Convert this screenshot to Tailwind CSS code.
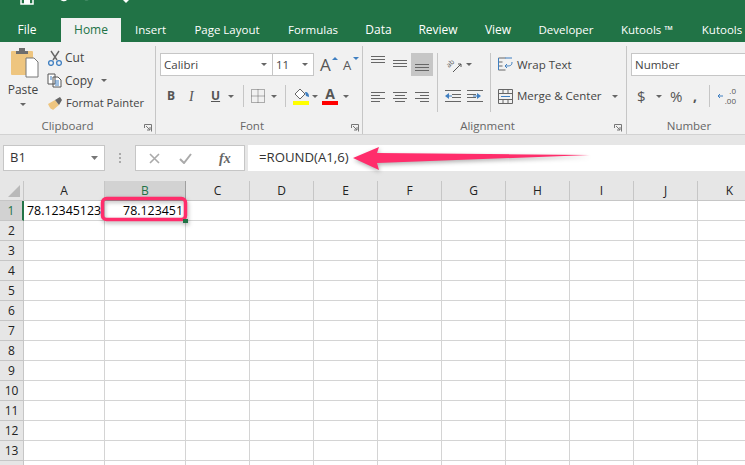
<!DOCTYPE html>
<html lang="en">
<head>
<meta charset="UTF-8">
<title>Excel ROUND</title>
<script src="https://cdn.jsdelivr.net/npm/@tailwindcss/browser@4"></script>
</head>
<body class="relative w-[745px] h-[465px] overflow-hidden bg-white font-['Open_Sans',sans-serif] text-[11.5px] text-[#444]">

<!-- Title bar and tabs -->
<header class="h-[42px] bg-[#217346] flex flex-col overflow-hidden">
  <div class="h-[18px] flex items-start text-white">
    <svg class="ml-[20px] mt-[-8px]" width="14" height="13" viewBox="0 0 14 13"><path d="M1 1h10l2 2v9H1z" fill="none" stroke="#fff" stroke-width="1.5"/><path d="M4 7h6v5H4z" fill="#fff"/></svg>
    <svg class="ml-[21px] mt-[-6px]" width="14" height="10" viewBox="0 0 14 10"><path d="M3 1c3 7 8 7 10 2" fill="none" stroke="#fff" stroke-width="1.5"/></svg>
    <svg class="ml-[12px] mt-[-6px]" width="14" height="10" viewBox="0 0 14 10"><path d="M11 1C8 7 4 7 2 3" fill="none" stroke="#5f9c7e" stroke-width="1.5"/></svg>
    <svg class="ml-[28px]" width="6" height="3" viewBox="0 0 6 3"><path d="M0 0h6L3 3z" fill="#fff"/></svg>
  </div>
  <nav class="w-[757px] h-[24px] flex items-center text-[12px] text-white whitespace-nowrap">
    <div class="w-[54px] text-center">File</div>
    <div class="ml-[7px] w-[60px] h-[24px] leading-[24px] text-center bg-[#f1f1f1] text-[#217346]">Home</div>
    <div class="w-[59px] text-center text-[11.5px]">Insert</div>
    <div class="w-[94px] text-center text-[11.5px]">Page Layout</div>
    <div class="w-[78px] text-center text-[11.5px]">Formulas</div>
    <div class="w-[53px] text-center">Data</div>
    <div class="w-[66px] text-center">Review</div>
    <div class="w-[54px] text-center">View</div>
    <div class="w-[82px] text-center text-[11.5px]">Developer</div>
    <div class="w-[80px] text-center text-[11.5px]">Kutools ™</div>
    <div class="w-[70px] text-center text-[11.5px]">Kutools</div>
  </nav>
</header>

<!-- Ribbon -->
<section class="h-[93px] bg-[#f1f1f1] border-b border-[#d2d2d2] flex">

  <!-- Clipboard -->
  <div class="relative w-[156px] shrink-0 h-[88px] mt-[4px] border-r border-[#c6c6c6] flex flex-col">
    <div class="h-[71px] flex">
      <div class="w-[46px] flex flex-col items-center">
        <svg class="ml-[3px]" width="30" height="34" viewBox="0 0 30 34">
          <rect x="1" y="5" width="22" height="24" rx="1" fill="#eec57f"/>
          <path d="M6 5h12v3H6zM9 2h6v3H9z" fill="#6d6d6d"/>
          <path d="M16 12h8l4 4v15H16z" fill="#fff" stroke="#777"/>
        </svg>
        <span class="mt-[2px] text-[12px] leading-[16px]">Paste</span>
        <svg class="mt-[5px]" width="6" height="3" viewBox="0 0 6 3"><path d="M0 0h6L3 3z" fill="#666"/></svg>
      </div>
      <div class="flex flex-col ml-[1px]">
        <div class="h-[23px] flex items-center">
          <svg width="16" height="16" viewBox="0 0 16 16" fill="none"><path d="M4 1l6 9M12 1L6 10" stroke="#666" stroke-width="1.4"/><circle cx="4" cy="13" r="2.4" stroke="#3f7fc1" stroke-width="1.3"/><circle cx="12" cy="13" r="2.4" stroke="#3f7fc1" stroke-width="1.3"/></svg>
          <span class="ml-[2px] text-[12px]">Cut</span>
        </div>
        <div class="h-[23px] flex items-center">
          <svg width="16" height="15" viewBox="0 0 16 15" fill="none" stroke="#555"><path d="M1 1h7v10H1zM6 4h5l3 3v7H6z" fill="#fff"/><path d="M3 4h2M3 6h2M8 8h4M8 10h4M8 12h4" stroke="#3f7fc1"/></svg>
          <span class="ml-[2px] text-[12px]">Copy</span>
          <svg class="ml-[8px]" width="6" height="3" viewBox="0 0 6 3"><path d="M0 0h6L3 3z" fill="#666"/></svg>
        </div>
        <div class="h-[23px] flex items-center whitespace-nowrap">
          <svg width="16" height="15" viewBox="0 0 16 15"><path d="M1 8l7-4 4 5-6 5c-1-1-1-1-2-1-1-1-2-3-3-5z" fill="#eec57f"/><path d="M8 4l5-3 2 3-3 5z" fill="#666"/></svg>
          <span class="ml-[3px] text-[11.2px]">Format Painter</span>
        </div>
      </div>
    </div>
    <div class="text-center text-[#666] mt-[3px] leading-[16px] pr-[20px]">Clipboard</div>
    <svg class="absolute left-[144px] bottom-[2px]" width="8" height="8" viewBox="0 0 8 8" fill="none" stroke="#777"><path d="M.5 4V.5H7.500M7.500.5V7.500M2 2l4 4M3 6h3V3"/></svg>
  </div>

  <!-- Font -->
  <div class="relative w-[207px] shrink-0 h-[88px] mt-[4px] border-r border-[#c6c6c6] flex flex-col">
    <div class="h-[71px] flex flex-col">
      <div class="mt-[7px] ml-[4px] flex items-center">
        <div class="w-[113px] h-[23px] bg-white border border-[#c6c6c6] flex items-center pl-[3px] pr-[5px] justify-between">
          <span>Calibri</span>
          <svg width="6" height="3" viewBox="0 0 6 3"><path d="M0 0h6L3 3z" fill="#666"/></svg>
        </div>
        <div class="w-[42px] h-[23px] -ml-px bg-white border border-[#c6c6c6] flex items-center pl-[3px] pr-[5px] justify-between">
          <span>11</span>
          <svg width="6" height="3" viewBox="0 0 6 3"><path d="M0 0h6L3 3z" fill="#666"/></svg>
        </div>
        <span class="ml-[6px] w-[18px] text-[17px] leading-[20px] text-[#555] relative">A<svg class="absolute right-0 top-[2px]" width="6" height="3" viewBox="0 0 6 3"><path d="M0 3h6L3 0z" fill="#3f7fc1"/></svg></span>
        <span class="ml-[5px] w-[16px] text-[13px] leading-[20px] text-[#555] relative">A<svg class="absolute right-0 top-[2px]" width="6" height="3" viewBox="0 0 6 3"><path d="M0 0h6L3 3z" fill="#3f7fc1"/></svg></span>
      </div>
      <div class="mt-[8px] ml-[11px] flex items-center h-[24px]">
        <span class="w-[22px] text-[12px] font-bold text-[#555]">B</span>
        <span class="w-[22px] italic font-['Liberation_Serif',serif] text-[14px] text-[#555]">I</span>
        <span class="w-[14px] text-[12px] underline text-[#555] font-bold">U</span>
        <svg class="ml-[3px]" width="6" height="3" viewBox="0 0 6 3"><path d="M0 0h6L3 3z" fill="#666"/></svg>
        <div class="ml-[9px] w-px h-[22px] bg-[#c6c6c6]"></div>
        <svg class="ml-[7px]" width="14" height="14" viewBox="0 0 14 14" fill="none" stroke="#666" stroke-dasharray="1 1"><path d="M.5.500h13v13H.5zM7 .5v13M.5 7h13"/></svg>
        <svg class="ml-[6px]" width="6" height="3" viewBox="0 0 6 3"><path d="M0 0h6L3 3z" fill="#666"/></svg>
        <div class="ml-[8px] w-px h-[22px] bg-[#c6c6c6]"></div>
        <svg class="ml-[7px]" width="17" height="17" viewBox="0 0 17 17"><path d="M7 1l5 5-5 5-5-5z" fill="#fff" stroke="#666"/><path d="M12 4c3 0 4 2 4 5l-3-1z" fill="#3f7fc1"/><rect y="13" width="16" height="4" fill="#ffff00"/></svg>
        <svg class="ml-[2px]" width="6" height="3" viewBox="0 0 6 3"><path d="M0 0h6L3 3z" fill="#666"/></svg>
        <div class="ml-[4px] w-[16px] h-[18px] relative text-center leading-[14px] text-[14px] font-bold text-[#555]">A<div class="absolute left-0 bottom-0 w-[16px] h-[4px] bg-[#ff0000]"></div></div>
        <svg class="ml-[5px]" width="6" height="3" viewBox="0 0 6 3"><path d="M0 0h6L3 3z" fill="#666"/></svg>
      </div>
    </div>
    <div class="text-center text-[#666] mt-[3px] leading-[16px] pr-[14px]">Font</div>
    <svg class="absolute left-[195px] bottom-[2px]" width="8" height="8" viewBox="0 0 8 8" fill="none" stroke="#777"><path d="M.5 4V.5H7.500M7.500.5V7.500M2 2l4 4M3 6h3V3"/></svg>
  </div>

  <!-- Alignment -->
  <div class="relative w-[264px] shrink-0 h-[88px] mt-[4px] border-r border-[#c6c6c6] flex flex-col">
    <div class="h-[71px] flex">
      <div class="ml-[8px] flex flex-col">
        <div class="mt-[7px] h-[23px] flex">
          <svg class="mt-[2px]" width="14" height="10" viewBox="0 0 14 10" stroke="#666"><path d="M0 1.500h14M0 4.500h14M0 7.500h14"/></svg>
          <svg class="ml-[8px] mt-[6px]" width="14" height="10" viewBox="0 0 14 10" stroke="#666"><path d="M0 1.500h14M0 4.500h14M0 7.500h14"/></svg>
          <div class="ml-[4px] w-[22px] h-[23px] bg-[#c6c6c6] flex justify-center items-end pb-[3px]">
            <svg width="14" height="10" viewBox="0 0 14 10" stroke="#666"><path d="M0 1.500h14M0 4.500h14M0 7.500h14"/></svg>
          </div>
        </div>
        <div class="mt-[8px] h-[24px] flex items-center">
          <svg width="14" height="11" viewBox="0 0 14 11" stroke="#666"><path d="M0 1.500h14M0 4.500h9M0 7.500h14M0 10.500h9"/></svg>
          <svg class="ml-[8px]" width="14" height="11" viewBox="0 0 14 11" stroke="#666"><path d="M0 1.500h14M2 4.500h10M0 7.500h14M2 10.500h10"/></svg>
          <svg class="ml-[8px]" width="14" height="11" viewBox="0 0 14 11" stroke="#666"><path d="M0 1.500h14M5 4.500h9M0 7.500h14M5 10.500h9"/></svg>
        </div>
      </div>
      <div class="ml-[4px] mt-[7px] w-px h-[59px] bg-[#c6c6c6] self-start"></div>
      <div class="ml-[7px] flex flex-col w-[38px]">
        <div class="mt-[7px] h-[23px] flex items-center">
          <svg width="18" height="18" viewBox="0 0 18 18" fill="none" stroke="#555"><text transform="translate(4 12) rotate(-45)" font-size="7" fill="#555" stroke="none">ab</text><path d="M8 16L16 8M16 8v3M16 8h-3"/></svg>
          <svg class="ml-[3px]" width="6" height="3" viewBox="0 0 6 3"><path d="M0 0h6L3 3z" fill="#666"/></svg>
        </div>
        <div class="mt-[8px] h-[24px] flex items-center">
          <svg width="16" height="12" viewBox="0 0 16 12" stroke="#666" fill="none"><path d="M0 .5h16M7 4.500h9M7 7.500h9M0 11.500h16"/><path d="M0 6l4-3v6z" fill="#3f7fc1" stroke="none"/><path d="M3 6h4" stroke="#3f7fc1"/></svg>
          <svg class="ml-[6px]" width="16" height="12" viewBox="0 0 16 12" stroke="#666" fill="none"><path d="M0 .5h16M0 4.500h9M0 7.500h9M0 11.500h16"/><path d="M16 6l-4-3v6z" fill="#3f7fc1" stroke="none" transform="translate(-2)"/><path d="M6 6h5" stroke="#3f7fc1"/></svg>
        </div>
      </div>
      <div class="ml-[7px] mt-[7px] w-px h-[59px] bg-[#c6c6c6] self-start"></div>
      <div class="ml-[7px] flex flex-col whitespace-nowrap">
        <div class="mt-[7px] h-[23px] flex items-center">
          <svg width="15" height="15" viewBox="0 0 15 15" fill="none" stroke="#666"><path d="M.5 1h7M.5 5h4M.5 9h4M.5 13h7"/><path d="M.5 1v12M7 1h7M7 9c5 0 7 0 7-4M7 9l2-2M7 9l2 2" stroke="#3f7fc1"/></svg>
          <span class="ml-[4px]">Wrap Text</span>
        </div>
        <div class="mt-[8px] h-[24px] flex items-center">
          <svg width="15" height="15" viewBox="0 0 15 15" fill="none" stroke="#666"><path d="M.5.500h14v14H.5zM.5 4.500h14M.5 10.500h14M5 .5v4M10 .5v4M5 10.500v4M10 10.500v4"/><path d="M3 7.500h9" stroke="#3f7fc1"/></svg>
          <span class="ml-[4px]">Merge &amp; Center</span>
          <svg class="ml-[10px]" width="6" height="3" viewBox="0 0 6 3"><path d="M0 0h6L3 3z" fill="#666"/></svg>
        </div>
      </div>
    </div>
    <div class="text-center text-[#666] mt-[3px] leading-[16px] pr-[14px]">Alignment</div>
    <svg class="absolute left-[251px] bottom-[2px]" width="8" height="8" viewBox="0 0 8 8" fill="none" stroke="#777"><path d="M.5 4V.5H7.500M7.500.5V7.500M2 2l4 4M3 6h3V3"/></svg>
  </div>

  <!-- Number -->
  <div class="w-[118px] shrink-0 h-[88px] mt-[4px] flex flex-col overflow-hidden">
    <div class="h-[71px] flex flex-col">
      <div class="mt-[7px] ml-[4px] w-[130px] h-[23px] bg-white border border-[#c6c6c6] flex items-center pl-[3px]">Number</div>
      <div class="mt-[8px] ml-[10px] h-[24px] flex items-center">
        <span class="w-[12px] text-[15px] text-[#555]">$</span>
        <svg class="ml-[7px]" width="6" height="3" viewBox="0 0 6 3"><path d="M0 0h6L3 3z" fill="#666"/></svg>
        <span class="ml-[8px] w-[14px] text-[15px] text-[#555]">%</span>
        <span class="ml-[9px] w-[6px] text-[14px] font-bold text-[#555] leading-[14px]">,</span>
        <div class="ml-[10px] w-px h-[22px] bg-[#c6c6c6]"></div>
        <svg class="ml-[7px] shrink-0" width="6" height="6" viewBox="0 0 6 6" fill="none" stroke="#3f7fc1"><path d="M6 3H1M3 1L1 3l2 2"/></svg>
        <div class="w-[13px] shrink-0 flex flex-col items-end gap-[2px] text-[8px] leading-[8px] text-[#555]"><span>.0</span><span>.00</span></div>
      </div>
    </div>
    <div class="text-center text-[#666] mt-[3px] leading-[16px] pl-[6px]">Number</div>
  </div>
</section>

<!-- Formula bar -->
<section class="h-[46px] bg-[#e6e6e6] pt-[10px] flex items-start">
  <div class="ml-[3px] w-[102px] h-[26px] bg-white border border-[#c6c6c6] flex items-center justify-between pl-[6px] pr-[6px] text-[13px] text-[#333]">
    <span>B1</span>
    <svg width="7" height="4" viewBox="0 0 7 4"><path d="M0 0h7L3.500 4z" fill="#777"/></svg>
  </div>
  <div class="w-[30px] h-[26px] flex flex-col items-center justify-center gap-[2px]">
    <i class="block w-[2px] h-[2px] bg-[#aaa]"></i><i class="block w-[2px] h-[2px] bg-[#aaa]"></i><i class="block w-[2px] h-[2px] bg-[#aaa]"></i>
  </div>
  <div class="w-[110px] h-[26px] bg-white border border-[#c6c6c6] flex items-center">
    <svg class="ml-[13px]" width="11" height="11" viewBox="0 0 11 11" stroke="#aaa" stroke-width="1.600"><path d="M1 1l9 9M10 1l-9 9"/></svg>
    <svg class="ml-[19px]" width="13" height="11" viewBox="0 0 13 11" fill="none" stroke="#aaa" stroke-width="2"><path d="M1 6l4 4 7-9"/></svg>
    <span class="ml-[27px] font-['Liberation_Serif',serif] italic font-bold text-[#666] text-[14px]">fx</span>
  </div>
  <div class="ml-[3px] flex-1 h-[26px] bg-white flex items-center pl-[11px] text-[13.2px] text-[#333]">=ROUND(A1,6)</div>
</section>

<!-- Sheet -->
<section id="sheet" class="grid grid-cols-[24px_81px_81px_64px_64px_64px_64px_64px_64px_64px_64px_64px] grid-rows-[20px] auto-rows-[20px] text-[12px] text-[#222]">
  <div class="bg-[#e6e6e6] border-r border-b border-[#c6c6c6] flex items-end justify-end p-[3px]">
    <svg width="12" height="12" viewBox="0 0 12 12"><path d="M12 0v12H0z" fill="#b9b9b9"/></svg>
  </div>
  <div class="bg-[#e6e6e6] border-r border-b border-[#c6c6c6] text-center leading-[19px]">A</div>
  <div class="bg-[#d2d2d2] border-r border-b border-[#9f9f9f] text-center leading-[19px] text-[#217346]">B</div>
  <div class="bg-[#e6e6e6] border-r border-b border-[#c6c6c6] text-center leading-[19px]">C</div>
  <div class="bg-[#e6e6e6] border-r border-b border-[#c6c6c6] text-center leading-[19px]">D</div>
  <div class="bg-[#e6e6e6] border-r border-b border-[#c6c6c6] text-center leading-[19px]">E</div>
  <div class="bg-[#e6e6e6] border-r border-b border-[#c6c6c6] text-center leading-[19px]">F</div>
  <div class="bg-[#e6e6e6] border-r border-b border-[#c6c6c6] text-center leading-[19px]">G</div>
  <div class="bg-[#e6e6e6] border-r border-b border-[#c6c6c6] text-center leading-[19px]">H</div>
  <div class="bg-[#e6e6e6] border-r border-b border-[#c6c6c6] text-center leading-[19px]">I</div>
  <div class="bg-[#e6e6e6] border-r border-b border-[#c6c6c6] text-center leading-[19px]">J</div>
  <div class="bg-[#e6e6e6] border-r border-b border-[#c6c6c6] text-center leading-[19px]">K</div>
</section>

<!-- Arrow and highlight drawn over the screenshot -->
<svg class="absolute left-0 top-0 pointer-events-none drop-shadow-[1px_2px_2px_rgba(0,0,0,0.3)]" width="745" height="465" viewBox="0 0 745 465" fill="none">
  <path d="M353 158L379 147L377 153L590 155L377 163L379 170Z" fill="#ff2d6b"/>
  <rect x="102.500" y="198.500" width="83" height="21" rx="4" stroke="#ff2d6b" stroke-width="3.500"/>
  <rect x="183" y="219" width="5" height="4" fill="#217346"/>
</svg>

<script>
  const sheet = document.getElementById("sheet");
  for (let r = 1; r <= 14; r++) {
    let label = r === 14 ? "" : r;
    let html = r === 1
      ? '<div class="bg-[#d2d2d2] border-r-2 border-r-[#217346] border-b border-[#c6c6c6] text-center leading-[19px] text-[#217346]">1</div>'
      : '<div class="bg-[#e6e6e6] border-r border-b border-[#c6c6c6] text-center leading-[19px]">' + label + '</div>';
    for (let c = 1; c <= 11; c++) {
      let text = "";
      let extra = "";
      if (r === 1 && c === 1) { text = "78.12345123"; extra = " pl-[3px] text-[12.4px] text-black"; }
      if (r === 1 && c === 2) { text = "78.123451"; extra = " text-right pr-[2px] text-[12.4px] text-black"; }
      html += '<div class="bg-white border-r border-b border-[#d4d4d4] leading-[19px] overflow-hidden whitespace-nowrap' + extra + '">' + text + '</div>';
    }
    sheet.insertAdjacentHTML("beforeend", html);
  }
</script>
</body>
</html>
